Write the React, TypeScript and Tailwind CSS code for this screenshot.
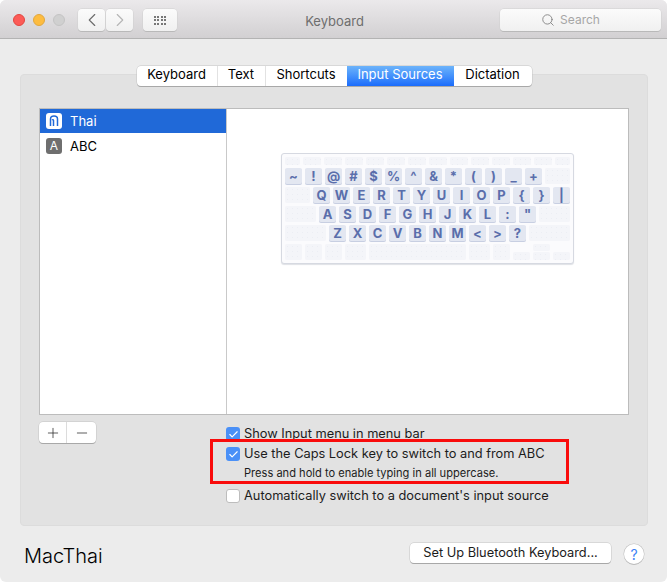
import { ChevronLeft, ChevronRight, Search, Plus, Minus, Check } from 'lucide-react';

const font = 'font-[Inter,"Liberation_Sans",sans-serif]';

const topRow = [15, 18, 18, 18, 18, 18, 18, 18, 18, 18, 18, 18, 18, 15];
const keyRows = [
  { lead: 0, keys: ['~', '!', '@', '#', '$', '%', '^', '&', '*', '(', ')', '_', '+'], tail: 25 },
  { lead: 25, keys: ['Q', 'W', 'E', 'R', 'T', 'Y', 'U', 'I', 'O', 'P', '{', '}', '|'], tail: 0 },
  { lead: 31, keys: ['A', 'S', 'D', 'F', 'G', 'H', 'J', 'K', 'L', ':', '"'], tail: 31 },
  { lead: 41, keys: ['Z', 'X', 'C', 'V', 'B', 'N', 'M', '<', '>', '?'], tail: 41 },
];
const bottomRow = [17, 17, 17, 21, 97, 21, 17];

const blankKey =
  'rounded-[2px] bg-[#f4f5f9] bg-[radial-gradient(#eceef4_0.6px,transparent_0.7px)] bg-[length:5px_5px]';

function KeyboardPreview() {
  return (
    <div className="flex w-[293px] flex-col gap-[3px] rounded-[3px] border border-[#d6d9e1] bg-[#fbfbfd] px-[3px] pt-[3px] pb-[3px] shadow-[0_1px_1px_#dfe1e6]">
      <div className="flex h-[8px] gap-[3px]">
        {topRow.map((w, i) => (
          <div key={i} className={blankKey} style={{ width: w }} />
        ))}
      </div>
      {keyRows.map((row, i) => (
        <div key={i} className="flex h-[16px] gap-[3px]">
          {row.lead > 0 && <div className={blankKey} style={{ width: row.lead }} />}
          {row.keys.map((k) => (
            <div
              key={k}
              className="flex w-[17px] items-center justify-center rounded-[2px] bg-[#e3e7f1] text-[13px] leading-none font-bold text-[#5a6eab] shadow-[0_1px_0_#c8cfe2]"
            >
              {k}
            </div>
          ))}
          {row.tail > 0 && <div className={blankKey} style={{ width: row.tail }} />}
        </div>
      ))}
      <div className="flex h-[16px] gap-[3px]">
        {bottomRow.map((w, i) => (
          <div key={i} className={blankKey} style={{ width: w }} />
        ))}
        <div className={`mt-[8px] h-[8px] w-[17px] ${blankKey}`} />
        <div className="flex w-[17px] flex-col gap-[1px]">
          <div className={`h-[7px] ${blankKey}`} />
          <div className={`h-[8px] ${blankKey}`} />
        </div>
        <div className={`mt-[8px] h-[8px] w-[17px] ${blankKey}`} />
      </div>
    </div>
  );
}

function Checkbox({ checked }: { checked: boolean }) {
  return checked ? (
    <div className="flex size-[14px] shrink-0 items-center justify-center rounded-[3px] bg-[#4a90f7]">
      <Check size={11} strokeWidth={2.5} className="text-white" />
    </div>
  ) : (
    <div className="size-[14px] shrink-0 rounded-[3px] border border-[#bdbdbd] bg-white" />
  );
}

function ToolbarButton({ children, className }: { children: React.ReactNode; className: string }) {
  return (
    <div
      className={`flex h-[22px] items-center justify-center rounded-[4px] bg-gradient-to-b from-[#fbfbfb] to-[#f0f0f0] shadow-[0_1px_0_#b9b9b9,0_0_0_0.5px_#d0d0d0] ${className}`}
    >
      {children}
    </div>
  );
}

export default function App() {
  return (
    <div className={`h-[582px] w-[667px] overflow-hidden bg-white ${font}`}>
      <div className="flex h-full flex-col overflow-hidden rounded-[6px] bg-[#ececec]">
        {/* title bar */}
        <div className="relative flex h-[39px] shrink-0 items-center border-b border-[#b3b3b3] bg-gradient-to-b from-[#ebe9eb] to-[#d2d0d2] pt-[2px] pr-[6px] pl-[13px]">
          <div className="flex gap-[8px]">
            <div className="size-[12px] rounded-full border border-[#e2463f] bg-[#fc5b57]" />
            <div className="size-[12px] rounded-full border border-[#e1a73e] bg-[#fdbc40]" />
            <div className="size-[12px] rounded-full border border-[#c4c4c4] bg-[#d0d0d0]" />
          </div>
          <div className="ml-[13px] flex gap-px">
            <ToolbarButton className="w-[27px]">
              <ChevronLeft size={22} strokeWidth={1.25} className="text-[#6c6c6c]" />
            </ToolbarButton>
            <ToolbarButton className="w-[27px]">
              <ChevronRight size={22} strokeWidth={1.25} className="text-[#b5b5b5]" />
            </ToolbarButton>
          </div>
          <ToolbarButton className="ml-[10px] w-[34px]">
            <div className="grid grid-cols-[repeat(4,2px)] gap-[1.5px]">
              {Array.from({ length: 12 }).map((_, i) => (
                <div key={i} className="size-[2px] bg-[#777]" />
              ))}
            </div>
          </ToolbarButton>
          <div className="flex-1 pt-[4px] pr-[8px] text-center text-[13px] text-[#6e6e6e]">Keyboard</div>
          <ToolbarButton className="w-[161px] gap-[5px] pr-[20px] text-[12px] text-[#a6a6a6]">
            <Search size={14} strokeWidth={1.5} className="text-[#808080]" />
            Search
          </ToolbarButton>
        </div>

        {/* content */}
        <div className="flex flex-1 flex-col pt-[35px] pr-[19px] pl-[20px]">
          <div className="flex h-[452px] flex-col rounded-[4px] border border-[#dcdcdc] bg-[#e2e2e2] px-[18px]">
            <div className="-mt-[9px] flex h-[20px] self-center overflow-hidden rounded-[4px] bg-white text-[13px] text-black shadow-[0_1px_0_#a8a8a8,0_0_0_0.5px_#c4c4c4]">
              <div className="flex w-[81px] items-center justify-center border-r border-[#e2e2e2] pb-[2px]">Keyboard</div>
              <div className="flex w-[48px] items-center justify-center border-r border-[#e2e2e2] pb-[2px]">Text</div>
              <div className="flex w-[81px] items-center justify-center pb-[2px]">Shortcuts</div>
              <div className="flex w-[107px] items-center justify-center bg-gradient-to-b from-[#6cb3fa] to-[#1a6bfb] pb-[2px] text-white">
                Input Sources
              </div>
              <div className="flex w-[78px] items-center justify-center pb-[2px]">Dictation</div>
            </div>

            <div className="mt-[22px] flex h-[307px] border border-[#bcbcbc] bg-white text-[13px]">
              <div className="w-[187px] shrink-0 border-r border-[#c9c9c9]">
                <div className="flex h-[24px] items-center gap-[8px] bg-[#2069d8] px-[6px] pt-px text-white">
                  <div className="-mt-px flex size-[16px] items-center justify-center rounded-[3px] bg-white">
                    <svg width="12" height="12" viewBox="0 0 12 12" fill="none" stroke="#2069d8" strokeWidth="1.5">
                      <path d="M2.5 11 V4 C2.5 1.8 4 1 6 1 C8 1 9.5 1.8 9.5 4 V11 M5.5 11 V5.5 C5.5 4.5 4.5 4.5 4.2 5.2" />
                    </svg>
                  </div>
                  Thai
                </div>
                <div className="flex h-[25px] items-center gap-[8px] px-[6px] pt-[3px] text-black">
                  <div className="-mt-[2px] flex size-[16px] items-center justify-center rounded-[3px] bg-[#6f6f6f] text-[12px] text-white">
                    A
                  </div>
                  ABC
                </div>
              </div>
              <div className="flex flex-1 justify-center pt-[44px]">
                <div className="h-[111px]">
                  <KeyboardPreview />
                </div>
              </div>
            </div>

            <div className="mt-[7px] flex">
              <div className="flex h-[21px] w-[57px] overflow-hidden rounded-[4px] bg-white shadow-[0_1px_0_#a8a8a8,0_0_0_0.5px_#c4c4c4]">
                <div className="flex w-[28px] items-center justify-center border-r border-[#dcdcdc]">
                  <Plus size={16} strokeWidth={1.1} className="text-[#222]" />
                </div>
                <div className="flex flex-1 items-center justify-center">
                  <Minus size={16} strokeWidth={1.1} className="text-[#222]" />
                </div>
              </div>

              <div className="relative ml-[130px] flex flex-col pt-[2px] text-[12.8px] text-[#1c1c1c]">
                <div className="flex h-[20px] items-center gap-[4px]">
                  <Checkbox checked />
                  Show Input menu in menu bar
                </div>
                <div className="flex h-[20px] items-center gap-[4px]">
                  <Checkbox checked />
                  Use the Caps Lock key to switch to and from ABC
                </div>
                <div className="ml-[18px] text-[11.1px] leading-[19px]">
                  Press and hold to enable typing in all uppercase.
                </div>
                <div className="mt-[3px] flex h-[20px] items-center gap-[4px]">
                  <Checkbox checked={false} />
                  Automatically switch to a document's input source
                </div>
                {/* red annotation */}
                <div className="absolute top-[17px] -left-[16px] h-[45px] w-[359px] border-[3px] border-[#f90c0c]" />
              </div>
            </div>
          </div>

          {/* footer */}
          <div className="mt-[17px] flex items-start pr-[4px] pl-[4px]">
            <div className="mt-[3px] flex-1 text-[20px] leading-[20px] font-light text-black">MacThai</div>
            <div className="flex h-[20px] w-[201px] items-center justify-center rounded-[4px] bg-white text-[12.8px] text-[#1c1c1c] shadow-[0_1px_0_#a8a8a8,0_0_0_0.5px_#c4c4c4]">
              Set Up Bluetooth Keyboard...
            </div>
            <div className="mt-px ml-[13px] flex size-[20px] items-center justify-center rounded-full bg-white text-[14px] text-[#3b82f6] shadow-[0_0_0_0.5px_#bdbdbd,0_1px_0_#bbb]">
              ?
            </div>
          </div>
        </div>
      </div>
    </div>
  );
}
